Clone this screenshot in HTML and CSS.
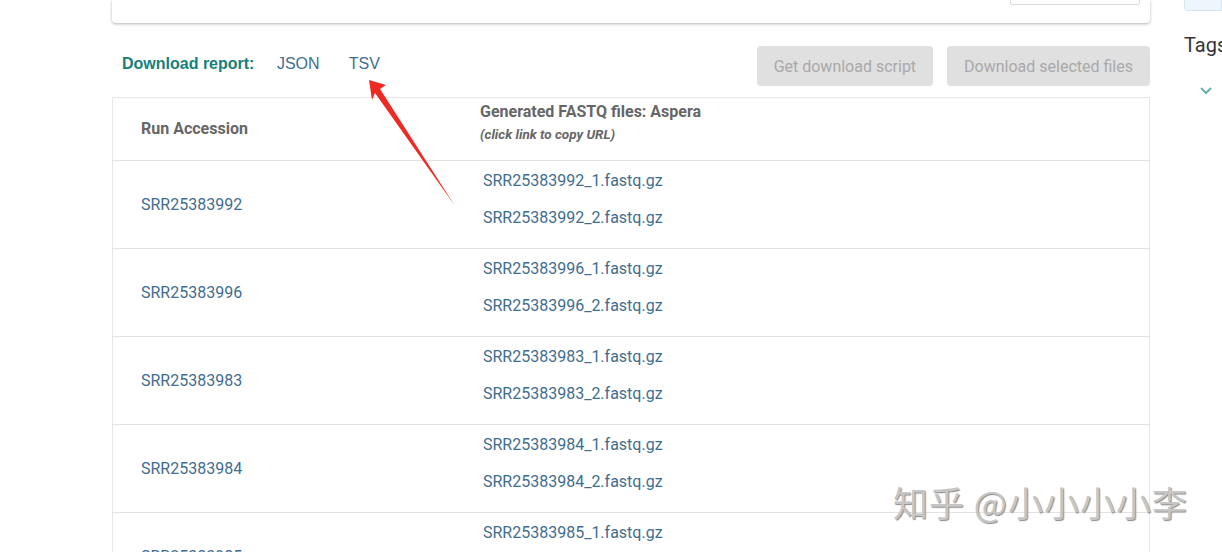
FILE: index.html
```html
<!DOCTYPE html>
<html lang="en">
<head>
  <meta charset="UTF-8" />
  <meta name="viewport" content="width=device-width, initial-scale=1.0"/>
  <title>Read files</title>
  <link rel="stylesheet" href="styles.css">
</head>
<body>

  <div class="page">
    <div class="main">
      <div class="card">
        <div class="card-field"></div>
      </div>

      <div class="report-bar">
        <div class="report-links">
          <span class="report-label">Download report:</span>
          <a href="#">JSON</a>
          <a href="#">TSV</a>
        </div>
        <div class="report-actions">
          <button disabled>Get download script</button>
          <button disabled>Download selected files</button>
        </div>
      </div>

      <table class="files">
        <thead>
          <tr>
            <th class="col-run">Run Accession</th>
            <th class="col-files">
              Generated FASTQ files: Aspera
              <span class="hint">(click link to copy URL)</span>
            </th>
          </tr>
        </thead>
        <tbody>
          <tr>
            <td class="col-run"><a href="#">SRR25383992</a></td>
            <td class="col-files">
              <a href="#">SRR25383992_1.fastq.gz</a>
              <a href="#">SRR25383992_2.fastq.gz</a>
            </td>
          </tr>
          <tr>
            <td class="col-run"><a href="#">SRR25383996</a></td>
            <td class="col-files">
              <a href="#">SRR25383996_1.fastq.gz</a>
              <a href="#">SRR25383996_2.fastq.gz</a>
            </td>
          </tr>
          <tr>
            <td class="col-run"><a href="#">SRR25383983</a></td>
            <td class="col-files">
              <a href="#">SRR25383983_1.fastq.gz</a>
              <a href="#">SRR25383983_2.fastq.gz</a>
            </td>
          </tr>
          <tr>
            <td class="col-run"><a href="#">SRR25383984</a></td>
            <td class="col-files">
              <a href="#">SRR25383984_1.fastq.gz</a>
              <a href="#">SRR25383984_2.fastq.gz</a>
            </td>
          </tr>
          <tr>
            <td class="col-run"><a href="#">SRR25383985</a></td>
            <td class="col-files">
              <a href="#">SRR25383985_1.fastq.gz</a>
              <a href="#">SRR25383985_2.fastq.gz</a>
            </td>
          </tr>
        </tbody>
      </table>
    </div>

    <div class="side">
      <div class="side-box"></div>
      <h3>Tags</h3>
      <svg class="chevron" width="14" height="10" viewBox="0 0 14 10">
        <polyline points="2,2 7,7 12,2" fill="none" stroke="#6aaeb0" stroke-width="2"/>
      </svg>
    </div>
  </div>

  <!-- annotation arrow pointing at TSV -->
  <svg class="arrow" width="1222" height="552" viewBox="0 0 1222 552">
    <polygon points="369,80 386,85 380,89 455,206 375,93 372,100" fill="#ee2a22"/>
  </svg>

  <div class="watermark">知乎 @小小小小李</div>

</body>
</html>
```

FILE: styles.css
```css
html,
body {
  height: 552px;
  overflow: hidden;
}

body {
  margin: 0;
  background: #fff;
  font-family: Roboto, "Liberation Sans", Arial, sans-serif;
  position: relative;
}

.page {
  display: flex;
  padding-left: 112px;
}

.main {
  width: 1038px;
  flex-shrink: 0;
}

.card {
  height: 23px;
  background: #fff;
  border-radius: 0 0 4px 4px;
  box-shadow: 0 1px 3px rgba(0,0,0,0.3);
  display: flex;
  justify-content: flex-end;
  padding-right: 10px;
}

.card-field {
  width: 128px;
  height: 4px;
  border: 1px solid #dcdcdc;
  border-top: none;
  border-radius: 0 0 3px 3px;
}

.report-bar {
  display: flex;
  justify-content: space-between;
  align-items: center;
  margin-top: 23px;
  padding-left: 10px;
}

.report-links {
  font-family: "Liberation Sans", Arial, sans-serif;
  font-size: 16px;
  margin-bottom: 5px;
}

.report-label {
  color: #177f79;
  font-weight: bold;
  margin-right: 18px;
}

.report-links a {
  color: #3f6d8f;
  text-decoration: none;
  margin-right: 25px;
}

.report-actions {
  display: flex;
  gap: 14px;
}

.report-actions button {
  height: 40px;
  padding: 0 17px;
  font-family: Roboto, sans-serif;
  font-size: 16px;
  color: #a9a9a9;
  background: #e0e0e0;
  border: none;
  border-radius: 4px;
}

.files {
  width: 1038px;
  margin-top: 11px;
  border-collapse: collapse;
  border: 1px solid #e6e6e6;
}

.files th {
  text-align: left;
  color: #666;
  font-size: 16px;
  font-weight: bold;
  line-height: 20px;
  padding: 4px 28px 17px;
}

.files th.col-run {
  vertical-align: middle;
  padding-top: 10px;
  padding-bottom: 10px;
}

.files .hint {
  display: block;
  margin-top: 3px;
  font-size: 13.5px;
  font-style: italic;
  line-height: 18px;
}

.files td {
  border-top: 1px solid #e3e3e3;
  padding: 10px 28px 20px;
  font-size: 16px;
  line-height: 20px;
}

.files .col-run {
  width: 311px;
}

.files th.col-files,
.files td.col-files {
  padding-left: 0;
}

.files td.col-run {
  vertical-align: middle;
  padding-top: 14px;
  padding-bottom: 14px;
}

.files a {
  color: #3f6d8f;
  text-decoration: none;
}

.files td.col-files a {
  display: block;
  padding-left: 3px;
}

.files td.col-files a + a {
  margin-top: 17px;
}

.side {
  margin-left: 34px;
  flex: 1;
  min-width: 0;
}

.side-box {
  height: 10px;
  background: #eef5fc;
  border: 1px solid #d8e6f2;
  border-top: none;
  border-radius: 0 0 0 4px;
}

.side h3 {
  margin: 22px 0 0;
  font-size: 20px;
  font-weight: normal;
  color: #333;
  line-height: 24px;
  white-space: nowrap;
}

.chevron {
  display: block;
  margin: 29px 0 0 15px;
}

.arrow {
  position: absolute;
  left: 0;
  top: 0;
  pointer-events: none;
}

.watermark {
  position: absolute;
  left: 893px;
  top: 482px;
  font-family: "Noto Sans CJK SC", sans-serif;
  font-size: 35px;
  line-height: 40px;
  letter-spacing: 1px;
  color: #c6c6c6;
  text-shadow: 1px 1px 1px #8c8c8c;
  white-space: nowrap;
}
```
